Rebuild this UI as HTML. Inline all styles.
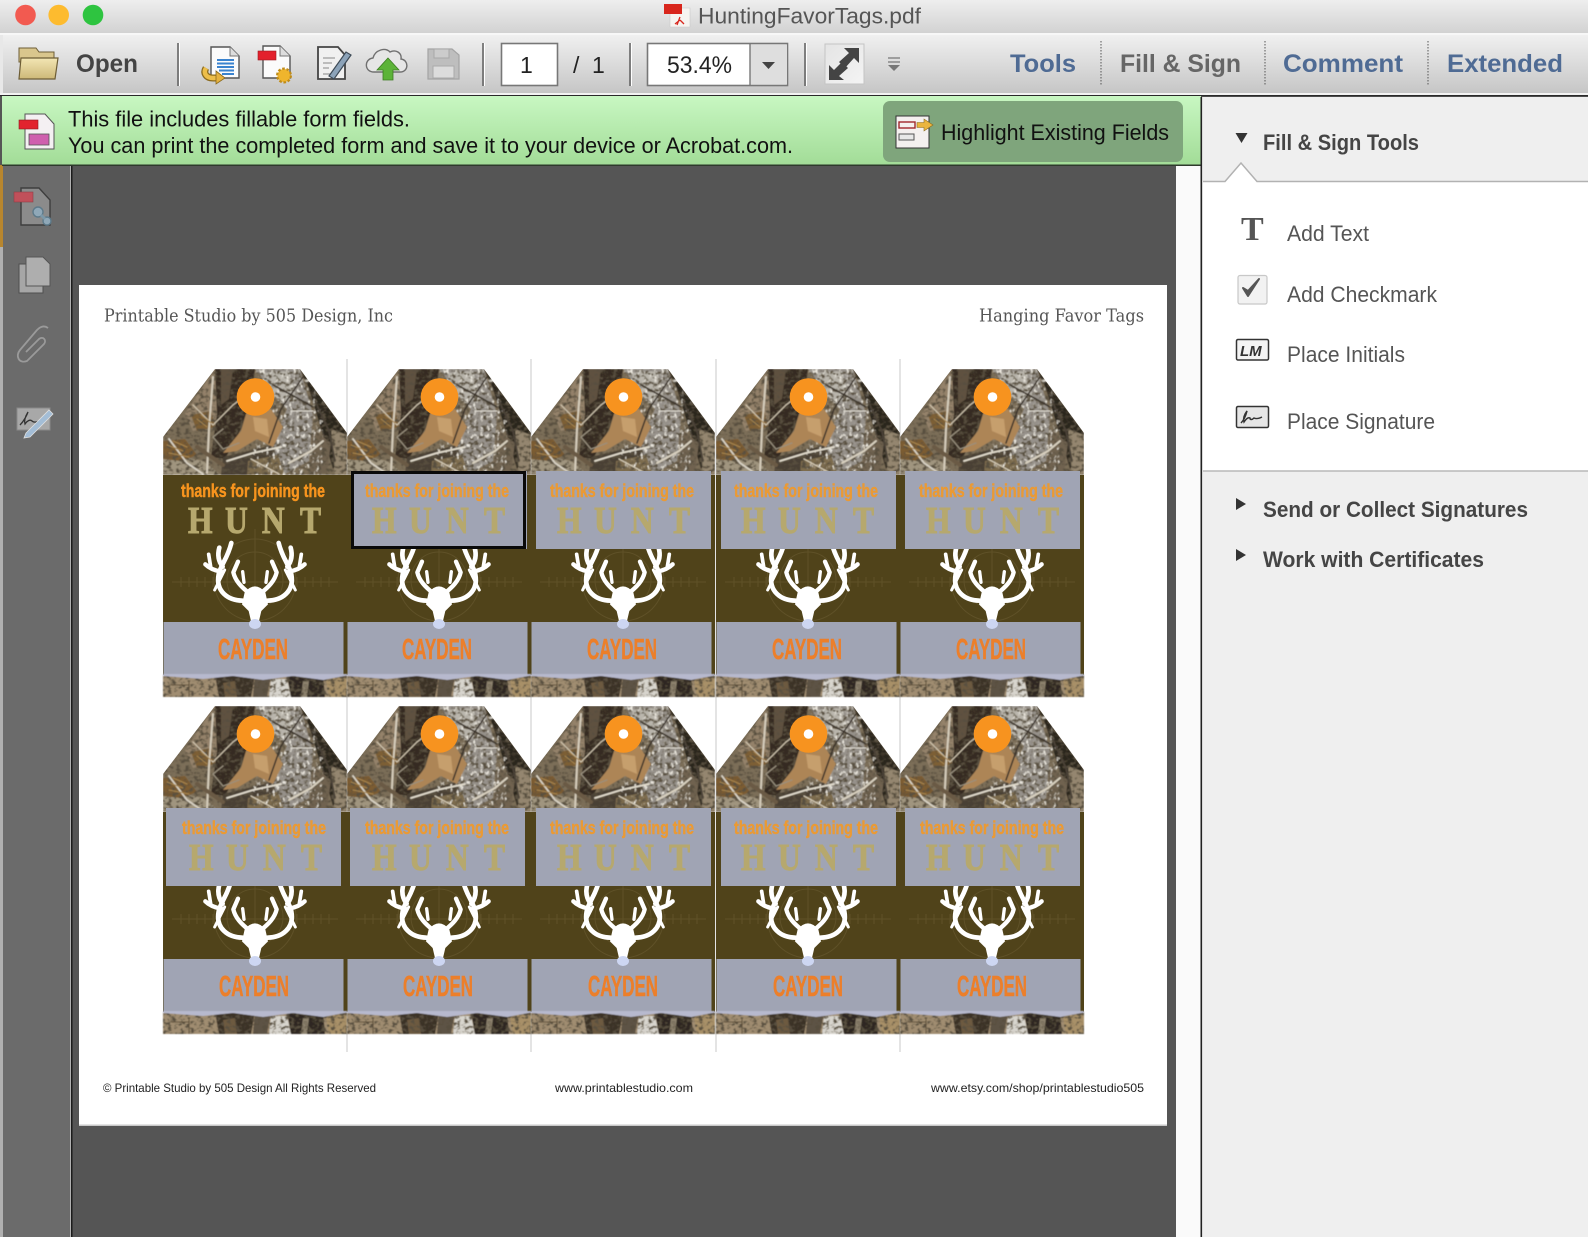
<!DOCTYPE html>
<html><head><meta charset="utf-8"><title>HuntingFavorTags.pdf</title>
<style>
html,body{margin:0;padding:0;width:1588px;height:1237px;overflow:hidden;background:#555}
svg{display:block}
text{font-family:"Liberation Sans",sans-serif}
.th{font-weight:bold;font-size:18px;fill:#f7941e;stroke:#f7941e;stroke-width:.45px}
.thb{font-weight:bold;font-size:18px;fill:#ea9a35;stroke:#ea9a35;stroke-width:.45px}
.hu{font-family:"Liberation Serif",serif;font-weight:bold;font-size:38px;fill:#b6a86e;stroke:#b6a86e;stroke-width:1px}
.ca{font-weight:bold;font-size:29px;fill:#ec7f2a;stroke:#ec7f2a;stroke-width:.5px}
.ui{font-size:22.5px;fill:#555}
.tb{font-size:25px;font-weight:bold;fill:#4f6b94}
.sb{font-size:22px;font-weight:bold;fill:#454545}
.it{font-size:22px;fill:#555}
.gr{font-size:22px;fill:#111}
.ft{font-size:12px;fill:#222}
.hd{font-family:"DejaVu Serif",serif;font-size:18px;fill:#555}
</style></head><body>
<svg width="1588" height="1237" viewBox="0 0 1588 1237" xmlns="http://www.w3.org/2000/svg">
<defs>
<linearGradient id="gt" x1="0" y1="0" x2="0" y2="1"><stop offset="0" stop-color="#eeeeee"/><stop offset="1" stop-color="#d2d2d2"/></linearGradient>
<linearGradient id="gb" x1="0" y1="0" x2="0" y2="1"><stop offset="0" stop-color="#f0f0f0"/><stop offset="1" stop-color="#c6c6c6"/></linearGradient>
<linearGradient id="gg" x1="0" y1="0" x2="0" y2="1"><stop offset="0" stop-color="#c8f7c2"/><stop offset="1" stop-color="#a2dc97"/></linearGradient>
<linearGradient id="fo" x1="0" y1="0" x2="0" y2="1"><stop offset="0" stop-color="#f3e6b4"/><stop offset="1" stop-color="#cdb878"/></linearGradient>
<linearGradient id="fb" x1="0" y1="0" x2="1" y2="1"><stop offset="0" stop-color="#e4e4e4"/><stop offset="1" stop-color="#f4f4f4"/></linearGradient>
<clipPath id="cp"><polygon points="0,68 52,0 137,0 184,64 184,106 0,106"/></clipPath>
<filter id="bl" x="-5%" y="-5%" width="110%" height="110%"><feGaussianBlur stdDeviation="0.45"/></filter>
<filter id="nd" x="0" y="0" width="100%" height="100%"><feTurbulence type="fractalNoise" baseFrequency=".22 .3" numOctaves="3" seed="4"/><feColorMatrix values="0 0 0 0 .1 0 0 0 0 .08 0 0 0 0 .05 5 0 0 0 -2.4"/></filter>
<filter id="nl" x="0" y="0" width="100%" height="100%"><feTurbulence type="fractalNoise" baseFrequency=".3 .2" numOctaves="3" seed="11"/><feColorMatrix values="0 0 0 0 .86 0 0 0 0 .83 0 0 0 0 .76 0 5 0 0 -2.9"/></filter>
<g id="tag">
  <g clip-path="url(#cp)" filter="url(#bl)">
    <rect width="184" height="106" fill="#7c6e58"/>
    <polygon points="0,84 40,92 58,106 0,106" fill="#a0957f"/>
    <polygon points="22,44 52,0 62,0 55,55 30,62" fill="#94826a"/>
    <polygon points="52,0 92,0 88,30 78,60 62,90 48,88 54,45" fill="#362c22"/>
    <polygon points="58,0 70,0 66,30 58,36" fill="#5f5140"/>
    <polygon points="92,0 137,0 150,46 146,92 120,106 102,100 112,70 124,40" fill="#96918a"/>
    <polygon points="100,4 126,2 134,30 118,34 106,20" fill="#b9b5ac"/>
    <polygon points="137,0 184,64 184,78 170,100 158,60 146,20" fill="#2b251d"/>
    <polygon points="150,60 168,74 164,104 146,104" fill="#6f6250"/>
    <polygon points="168,60 184,66 184,106 172,106" fill="#94866f"/>
    <polygon points="60,88 110,76 118,106 58,106" fill="#4a4034"/>
    <polygon points="85,92 115,86 122,106 84,106" fill="#7d6c4e"/>
    <polygon points="0,72 22,70 34,86 18,92 0,90" fill="#7b5b31"/>
    <polygon points="28,46 48,42 52,58 34,62" fill="#7d5f35"/>
    <rect width="184" height="106" filter="url(#nd)"/>
    <rect x="90" width="70" height="106" filter="url(#nl)"/>
    <polygon points="84,42 108,40 120,58 110,78 94,70 74,82 60,84 78,62" fill="#ad8557"/>
    <polygon points="90,48 104,50 106,68 92,62" fill="#c69f6d"/>
    <g fill="none" stroke-linecap="round">
      <path d="M50,8 46,60 44,104" stroke="#d6cdbc" stroke-width="2"/>
      <path d="M6,70 24,94 40,105" stroke="#d8d2c4" stroke-width="1.800"/>
      <path d="M34,78 60,96" stroke="#6b5a44" stroke-width="4"/>
      <path d="M30,36 50,56 70,36 78,30" stroke="#cfc4ae" stroke-width="1.200"/>
      <path d="M64,92 90,84 118,78" stroke="#e2dccd" stroke-width="1.800"/>
      <path d="M88,90 116,105" stroke="#d9cfba" stroke-width="1.200"/>
      <path d="M126,94 148,82 160,72" stroke="#d8d0bf" stroke-width="2"/>
      <path d="M110,16 136,30 150,38" stroke="#3f382e" stroke-width="1.600"/>
      <path d="M140,8 118,40 106,74" stroke="#3a332a" stroke-width="1.500"/>
      <path d="M128,42 150,42" stroke="#e0dcd2" stroke-width="1"/>
      <path d="M60,60 50,68 60,80 76,74" stroke="#9a917f" stroke-width="1.200"/>
      <path d="M152,32 166,62 172,92" stroke="#4b4338" stroke-width="1.800"/>
      <path d="M4,76 20,82M6,84 26,88M10,72 24,78M34,50 44,58M38,46 48,54" stroke="#a88650" stroke-width="1"/>
    </g>
  </g>
  <circle cx="92.500" cy="28" r="18.800" fill="#f7931f"/><circle cx="92.500" cy="28" r="4.800" fill="#fff"/>
  <rect y="106" width="184" height="200" fill="#50431a"/>
  <g fill="none" stroke="#5f5128" stroke-width="1">
    <circle cx="92" cy="211" r="41"/><circle cx="92" cy="211" r="28"/>
    <path d="M9,213H175M92,160V250"/>
    <path d="M18,208v10M26,208v10M34,208v10M42,208v10M50,208v10M134,208v10M142,208v10M150,208v10M158,208v10M166,208v10"/>
  </g>
  <g transform="translate(-3,166) scale(.3333)">
    <g id="ant" fill="none" stroke="#fff" stroke-linecap="round" stroke-linejoin="round">
      <path d="M248,197C205,197 166,170 176,118C182,90 203,70 214,24" stroke-width="14"/>
      <path d="M262,170C245,156 226,138 220,112L234,80" stroke-width="13"/>
      <path d="M252,142L248,110" stroke-width="10"/>
      <path d="M136,88C150,102 165,107 184,110" stroke-width="13"/>
      <path d="M146,58L152,95" stroke-width="11"/>
      <path d="M178,38C172,60 176,80 188,95" stroke-width="14"/>
      <path d="M194,105L164,165" stroke-width="9"/>
    </g>
    <use href="#ant" transform="translate(570,0) scale(-1,1)"/>
    <path d="M254,172Q285,136 316,172L324,208L304,228L297,258H273L266,228L246,208Z" fill="#fff"/>
  </g>
  <rect x=".5" y="253" width="180" height="53" fill="#a0a4b4"/>
  <ellipse cx="92" cy="255" rx="6" ry="5" fill="#cdd6f2"/>
  <g filter="url(#bl)">
    <rect y="306" width="184" height="22" fill="#a08d71"/>
    <polygon points="52,306 92,306 88,328 56,328" fill="#3a3026"/>
    <polygon points="60,314 72,312 74,328 62,328" fill="#6d5a40"/>
    <polygon points="92,306 108,306 104,328 90,328" fill="#5d5245"/>
    <polygon points="108,310 124,310 128,328 106,328" fill="#d8d5ce"/>
    <polygon points="124,306 160,306 162,328 128,328" fill="#2e2820"/>
    <polygon points="140,312 146,312 144,328 138,328" fill="#8d826e"/>
    <polygon points="162,306 184,306 184,328 166,328" fill="#a89068"/>
    <rect y="306" width="184" height="22" filter="url(#nd)"/>
    <path d="M26,312V328M8,316H26" stroke="#5b4d38" stroke-width="1"/>
    <path d="M0,305H184V306.500L160,311 130,307 100,311 70,307 40,310 0,307Z" fill="#b7b9ce"/>
  </g>
</g>
<rect id="bx" x="5" y="102" width="175" height="78" fill="#a0a4b4"/>
</defs>

<!-- main backgrounds -->
<rect width="1588" height="1237" fill="#555"/>
<rect x="1176" y="165" width="25" height="1072" fill="#fafafa"/>
<rect x="0" y="165" width="3" height="1072" fill="#b0b0b0"/>
<rect x="0" y="165" width="3" height="82" fill="#b8862e"/>
<rect x="3" y="165" width="67" height="1072" fill="#6b6b6b"/>
<rect x="70" y="165" width="1" height="1072" fill="#b0b0b0"/>
<rect x="71" y="165" width="1.500" height="1072" fill="#1c1c1c"/>

<!-- title bar -->
<rect width="1588" height="33" fill="url(#gt)"/>
<rect y="33" width="1588" height="2" fill="#f7f7f7"/>
<circle cx="25.500" cy="15" r="10.300" fill="#f25a50"/>
<circle cx="58.700" cy="15" r="10.300" fill="#fdbb2f"/>
<circle cx="93" cy="15" r="10.300" fill="#2ec440"/>
<path d="M670,8h20v19h-20z" fill="#f6f4f0" stroke="#c8c8c8" stroke-width=".6"/>
<rect x="664" y="4" width="18" height="10" fill="#d8261c"/>
<path d="M680,17 677,25M680,20 684,24M680,20 675,24" stroke="#d8261c" stroke-width="1.300" fill="none"/>
<text x="698" y="23.500" class="ui" textLength="223" lengthAdjust="spacingAndGlyphs">HuntingFavorTags.pdf</text>

<!-- toolbar -->
<rect y="35" x="3" width="1585" height="58" fill="url(#gb)"/>
<rect x="0" y="35" width="3" height="58" fill="#e8e8e8"/>
<rect y="93" width="1588" height="2" fill="#f3f3f3"/>
<rect y="95" width="1588" height="1.200" fill="#2a2a2a"/>
<!-- folder -->
<path d="M19,48h17l3,4h15v10H19z" fill="#d9c68d" stroke="#6d5d36" stroke-width="1"/>
<path d="M21,58h37l-3,21H19z" fill="url(#fo)" stroke="#6d5d36" stroke-width="1.200"/>
<text x="76" y="72" font-weight="bold" font-size="25" fill="#444" textLength="62" lengthAdjust="spacingAndGlyphs">Open</text>
<g stroke="#666" stroke-width="1.600"><path d="M178,43V86M483,43V86M630,43V86M805,43V86"/></g>
<g stroke="#fff" stroke-width="1"><path d="M179.500,43V86M484.500,43V86M631.500,43V86M806.500,43V86"/></g>
<!-- icon: doc + arrow -->
<path d="M211,47h19l9,9v22h-28z" fill="#fbfbfb" stroke="#555" stroke-width="1.400"/>
<path d="M230,47v9h9" fill="#ddd" stroke="#777" stroke-width="1"/>
<path d="M217,60h17M217,63.500h17M217,67h17M219,70.500h15M222,74h12" stroke="#3a83cf" stroke-width="2"/>
<path d="M206,68c-3,5 0,10 7,10h5" fill="none" stroke="#8a6a1e" stroke-width="7"/>
<path d="M206,68c-3,5 0,10 7,10h5" fill="none" stroke="#edbe4a" stroke-width="4.500"/>
<path d="M216,71l9,7-9,6z" fill="#e6b23f" stroke="#8a6a1e" stroke-width=".8"/>
<!-- icon: doc + red + gear -->
<path d="M263,46h17l10,10v22h-27z" fill="#fbfbfb" stroke="#555" stroke-width="1.400"/>
<path d="M280,46v10h10" fill="#ddd" stroke="#777"/>
<rect x="258" y="51" width="18" height="9" fill="#e3202c" stroke="#9a1a20" stroke-width=".6"/>
<circle cx="284" cy="75.500" r="6.500" fill="#efb52d" stroke="#c08c18" stroke-width="3" stroke-dasharray="2.500 1.600"/>
<circle cx="284" cy="75.500" r="5.800" fill="#efb52d"/>
<!-- icon: form + pen -->
<path d="M318,47h20l7,8v24h-27z" fill="#f0f0f0" stroke="#444" stroke-width="1.800"/>
<path d="M323,58h12M323,63h9M323,68h6M323,74h8" stroke="#aaa" stroke-width="1.400"/>
<path d="M329,76l17-24 5,3-17,24z" fill="#8ca3b9" stroke="#3d4a56" stroke-width="1.200"/>
<!-- icon: cloud -->
<path d="M374,72c-10,0-10-13-1-14 2-8 12-11 17-6 6-3 12 1 11,7 8,1 8,13-1,13z" fill="#e6e6e6" stroke="#707070" stroke-width="1.400"/>
<path d="M388,58l11,12h-6v10h-10v-10h-6z" fill="#5cb338" stroke="#3c7c22" stroke-width=".8"/>
<!-- icon: floppy -->
<path d="M428,49h24l7,6v24h-31z" fill="#bebebe" stroke="#a4a4a4" stroke-width="1.200"/>
<path d="M434,49h15v9h-15z" fill="#cccccc" stroke="#a8a8a8"/>
<rect x="433" y="66" width="21" height="12" fill="#dcdcdc" stroke="#aaa"/>
<!-- page input -->
<rect x="501.500" y="43.500" width="56" height="42" fill="#fff" stroke="#777" stroke-width="1.600"/>
<text x="520" y="73" font-size="23" fill="#222">1</text>
<text x="573" y="73" font-size="23" fill="#222">/</text>
<text x="592" y="73" font-size="23" fill="#222">1</text>
<!-- zoom box -->
<rect x="647.500" y="43.500" width="140" height="42" fill="#fff" stroke="#777" stroke-width="1.600"/>
<rect x="750" y="44.500" width="37" height="40" fill="#dedede"/>
<path d="M750,44V85" stroke="#777" stroke-width="1.400"/>
<path d="M762,62h13l-6.500,7z" fill="#444"/>
<text x="667" y="73" font-size="24" fill="#222" textLength="65" lengthAdjust="spacingAndGlyphs">53.4%</text>
<!-- fit button -->
<rect x="825" y="44" width="39" height="40" fill="url(#fb)" stroke="#c4c4c4"/>
<path d="M859,48V63L854,58 845,68 839,62 849,53 844,48z" fill="#444"/>
<path d="M829,80V65L834,70 842,62 848,68 839,76 844,80z" fill="#444"/>
<path d="M888,58h12M888,62h12" stroke="#888" stroke-width="1.400"/>
<path d="M888,65h12l-6,6z" fill="#777"/>
<text x="1010" y="72" class="tb" textLength="66" lengthAdjust="spacingAndGlyphs">Tools</text>
<text x="1120" y="72" class="tb" style="fill:#666" textLength="121" lengthAdjust="spacingAndGlyphs">Fill &amp; Sign</text>
<text x="1283" y="72" class="tb" textLength="120" lengthAdjust="spacingAndGlyphs">Comment</text>
<text x="1447" y="72" class="tb" textLength="116" lengthAdjust="spacingAndGlyphs">Extended</text>
<g stroke="#555" stroke-width="1" stroke-dasharray="1.500 1.500"><path d="M1101,41V86M1265,41V86M1428,41V86"/></g>

<!-- green bar -->
<rect x="2" y="96" width="1199" height="69.500" fill="url(#gg)"/>
<rect x="2" y="164.500" width="1199" height="1.500" fill="#2e3a2c"/>
<path d="M25,114h20l9,10v25h-29z" fill="#f4f0f2" stroke="#555" stroke-width="1"/>
<rect x="19" y="120" width="19" height="9" fill="#e2232e" stroke="#8d1a20" stroke-width=".6"/>
<rect x="29" y="134" width="20" height="11" fill="#cf5fae" stroke="#555" stroke-width=".8"/>
<text x="68" y="126.500" class="gr" textLength="342" lengthAdjust="spacingAndGlyphs">This file includes fillable form fields.</text>
<text x="68" y="153" class="gr" textLength="725" lengthAdjust="spacingAndGlyphs">You can print the completed form and save it to your device or Acrobat.com.</text>
<rect x="883" y="101" width="300" height="61" rx="7" fill="#7fa57c"/>
<rect x="896" y="116" width="33" height="32" fill="#f4f0ef" stroke="#333" stroke-width="1"/>
<rect x="899" y="122" width="16" height="6" fill="#f4f0ef" stroke="#a2272c" stroke-width="1.400"/>
<rect x="899" y="134" width="15" height="6" fill="#e8e8e8" stroke="#555" stroke-width="1"/>
<path d="M934,125l-9-6v3.500h-7v5h7v3.500z" transform="translate(-1,0)" fill="#eab53e" stroke="#8a6a1e" stroke-width=".6"/>
<text x="941" y="140" class="gr" textLength="228" lengthAdjust="spacingAndGlyphs">Highlight Existing Fields</text>

<!-- right panel -->
<rect x="1202" y="97" width="386" height="1140" fill="#efefef"/>
<rect x="1200.500" y="97" width="1.600" height="1140" fill="#222"/>
<rect x="1203" y="181" width="385" height="290" fill="#fff"/>
<path d="M1203,181.500H1225L1241,163 1257,181.500H1588" fill="#fff" stroke="#b2b2b2" stroke-width="1.500"/>
<path d="M1203,471H1588" stroke="#b8b8b8" stroke-width="1.600"/>
<path d="M1235.500,133h12l-6,10z" fill="#333"/>
<text x="1263" y="150" class="sb" textLength="156" lengthAdjust="spacingAndGlyphs">Fill &amp; Sign Tools</text>
<text x="1241" y="240" style="font-family:'Liberation Serif',serif" font-weight="bold" font-size="34" fill="#555">T</text>
<text x="1287" y="241" class="it" textLength="82" lengthAdjust="spacingAndGlyphs">Add Text</text>
<rect x="1238" y="275.500" width="29" height="28.500" rx="2" fill="#f2f2f2" stroke="#c8c8c8" stroke-width="1.200"/>
<path d="M1243,288l5,8 11-17-11,12z" fill="#555" stroke="#555" stroke-width="2" stroke-linejoin="round"/>
<text x="1287" y="302" class="it" textLength="150" lengthAdjust="spacingAndGlyphs">Add Checkmark</text>
<rect x="1236.500" y="339.500" width="32" height="20.500" rx="1.500" fill="#f4f4f4" stroke="#333" stroke-width="1.500"/>
<text x="1240" y="356" font-size="15" font-weight="bold" font-style="italic" fill="#333">LM</text>
<text x="1287" y="362" class="it" textLength="118" lengthAdjust="spacingAndGlyphs">Place Initials</text>
<rect x="1236.500" y="406.500" width="32" height="21" rx="1.500" fill="#e6e6e6" stroke="#333" stroke-width="1.500"/>
<path d="M1241,423c3-3 5-8 6-12-3 4-4 8-3 11 2-3 4-5 6-4 0 2 2 2 4 0 2 1 4 1 8-1" fill="none" stroke="#333" stroke-width="1.500"/>
<text x="1287" y="429" class="it" textLength="148" lengthAdjust="spacingAndGlyphs">Place Signature</text>
<path d="M1236,498l10,6-10,6z" fill="#333"/>
<text x="1263" y="517" class="sb" textLength="265" lengthAdjust="spacingAndGlyphs">Send or Collect Signatures</text>
<path d="M1236,549l10,6-10,6z" fill="#333"/>
<text x="1263" y="567" class="sb" textLength="221" lengthAdjust="spacingAndGlyphs">Work with Certificates</text>

<!-- sidebar icons -->
<path d="M21,188h18l11,12v25h-29z" fill="#8b8b8b" stroke="#3e3e3e" stroke-width="1.400"/>
<rect x="14" y="192" width="19" height="10" fill="#c0505a" stroke="#8e3f45" stroke-width=".6"/>
<circle cx="38" cy="212" r="5" fill="#8fa8b8" stroke="#5d7a8a" stroke-width="1.400"/>
<circle cx="47" cy="221" r="4" fill="#8fa8b8" stroke="#5d7a8a" stroke-width="1.400"/>
<path d="M41,215l4,4" stroke="#7b98a8" stroke-width="3"/>
<rect x="19" y="264" width="24" height="29" fill="#a6a6a6" stroke="#4f4f4f" stroke-width="1"/>
<path d="M26,257h17l7,7v22h-24z" fill="#aeaeae" stroke="#555" stroke-width="1"/>
<path d="M48,328c-4-3-8-1-11,2L20,350c-5,6-1,14 7,11l17-17c3-4-1-8-5-5L26,352" fill="none" stroke="#9a9a9a" stroke-width="1.800"/>
<rect x="17" y="408" width="33" height="22" fill="#a8a8a8" stroke="#8a8a8a"/>
<path d="M20,425c4-4 7-10 8-13-3 5-4 9-3 12 2-3 5-5 7-3 2 2 6 1 10-1" fill="none" stroke="#333" stroke-width="1.300"/>
<path d="M26,433l23-23 4,4-23,23-6,1z" fill="#a3bdd6" stroke="#e0e0e0" stroke-width=".8"/>

<!-- page -->
<rect x="79" y="285" width="1088" height="840" fill="#fff"/>
<rect x="79" y="1124.500" width="1088" height="1.500" fill="#c8c8c8"/>
<text x="104" y="321.500" class="hd" textLength="289" lengthAdjust="spacingAndGlyphs">Printable Studio by 505 Design, Inc</text>
<text x="979" y="321.500" class="hd" textLength="165" lengthAdjust="spacingAndGlyphs">Hanging Favor Tags</text>
<g stroke="#d2d2d2" stroke-width="1.200"><path d="M347,359V1052M531,359V1052M716,359V1052M900,359V1052"/></g>

<!-- Row 1 -->
<g transform="translate(163,369)"><use href="#tag"/><text x="18" y="128" class="th" textLength="144" lengthAdjust="spacingAndGlyphs">thanks for joining the</text><text transform="translate(25,164) scale(.83,1)" x="0 44.600 89 135" class="hu">HUNT</text><text x="55" y="290" class="ca" textLength="70" lengthAdjust="spacingAndGlyphs">CAYDEN</text></g>
<g transform="translate(347,369)"><use href="#tag"/><use href="#bx"/><rect x="5.500" y="103.500" width="172" height="75" fill="none" stroke="#0a0a0a" stroke-width="3"/><text x="18" y="128" class="thb" textLength="144" lengthAdjust="spacingAndGlyphs">thanks for joining the</text><text transform="translate(25,164) scale(.83,1)" x="0 44.600 89 135" class="hu">HUNT</text><text x="55" y="290" class="ca" textLength="70" lengthAdjust="spacingAndGlyphs">CAYDEN</text></g>
<g transform="translate(531,369)"><use href="#tag"/><use href="#bx"/><text x="19" y="128" class="thb" textLength="144" lengthAdjust="spacingAndGlyphs">thanks for joining the</text><text transform="translate(26,164) scale(.83,1)" x="0 44.600 89 135" class="hu">HUNT</text><text x="56" y="290" class="ca" textLength="70" lengthAdjust="spacingAndGlyphs">CAYDEN</text></g>
<g transform="translate(716,369)"><use href="#tag"/><use href="#bx"/><text x="18" y="128" class="thb" textLength="144" lengthAdjust="spacingAndGlyphs">thanks for joining the</text><text transform="translate(25,164) scale(.83,1)" x="0 44.600 89 135" class="hu">HUNT</text><text x="56" y="290" class="ca" textLength="70" lengthAdjust="spacingAndGlyphs">CAYDEN</text></g>
<g transform="translate(900,369)"><use href="#tag"/><use href="#bx"/><text x="19" y="128" class="thb" textLength="144" lengthAdjust="spacingAndGlyphs">thanks for joining the</text><text transform="translate(26,164) scale(.83,1)" x="0 44.600 89 135" class="hu">HUNT</text><text x="56" y="290" class="ca" textLength="70" lengthAdjust="spacingAndGlyphs">CAYDEN</text></g>
<!-- Row 2 -->
<g transform="translate(163,706)"><use href="#tag"/><use href="#bx" x="-2"/><text x="19" y="128" class="thb" textLength="144" lengthAdjust="spacingAndGlyphs">thanks for joining the</text><text transform="translate(26,164) scale(.83,1)" x="0 44.600 89 135" class="hu">HUNT</text><text x="56" y="290" class="ca" textLength="70" lengthAdjust="spacingAndGlyphs">CAYDEN</text></g>
<g transform="translate(347,706)"><use href="#tag"/><use href="#bx" x="-2"/><text x="18" y="128" class="thb" textLength="144" lengthAdjust="spacingAndGlyphs">thanks for joining the</text><text transform="translate(25,164) scale(.83,1)" x="0 44.600 89 135" class="hu">HUNT</text><text x="56" y="290" class="ca" textLength="70" lengthAdjust="spacingAndGlyphs">CAYDEN</text></g>
<g transform="translate(531,706)"><use href="#tag"/><use href="#bx"/><text x="19" y="128" class="thb" textLength="144" lengthAdjust="spacingAndGlyphs">thanks for joining the</text><text transform="translate(26,164) scale(.83,1)" x="0 44.600 89 135" class="hu">HUNT</text><text x="57" y="290" class="ca" textLength="70" lengthAdjust="spacingAndGlyphs">CAYDEN</text></g>
<g transform="translate(716,706)"><use href="#tag"/><use href="#bx"/><text x="18" y="128" class="thb" textLength="144" lengthAdjust="spacingAndGlyphs">thanks for joining the</text><text transform="translate(25,164) scale(.83,1)" x="0 44.600 89 135" class="hu">HUNT</text><text x="57" y="290" class="ca" textLength="70" lengthAdjust="spacingAndGlyphs">CAYDEN</text></g>
<g transform="translate(900,706)"><use href="#tag"/><use href="#bx"/><text x="20" y="128" class="thb" textLength="144" lengthAdjust="spacingAndGlyphs">thanks for joining the</text><text transform="translate(26,164) scale(.83,1)" x="0 44.600 89 135" class="hu">HUNT</text><text x="57" y="290" class="ca" textLength="70" lengthAdjust="spacingAndGlyphs">CAYDEN</text></g>

<text x="103" y="1092" class="ft" textLength="273" lengthAdjust="spacingAndGlyphs">© Printable Studio by 505 Design All Rights Reserved</text>
<text x="555" y="1092" class="ft" textLength="138" lengthAdjust="spacingAndGlyphs">www.printablestudio.com</text>
<text x="931" y="1092" class="ft" textLength="213" lengthAdjust="spacingAndGlyphs">www.etsy.com/shop/printablestudio505</text>
</svg>
</body></html>
